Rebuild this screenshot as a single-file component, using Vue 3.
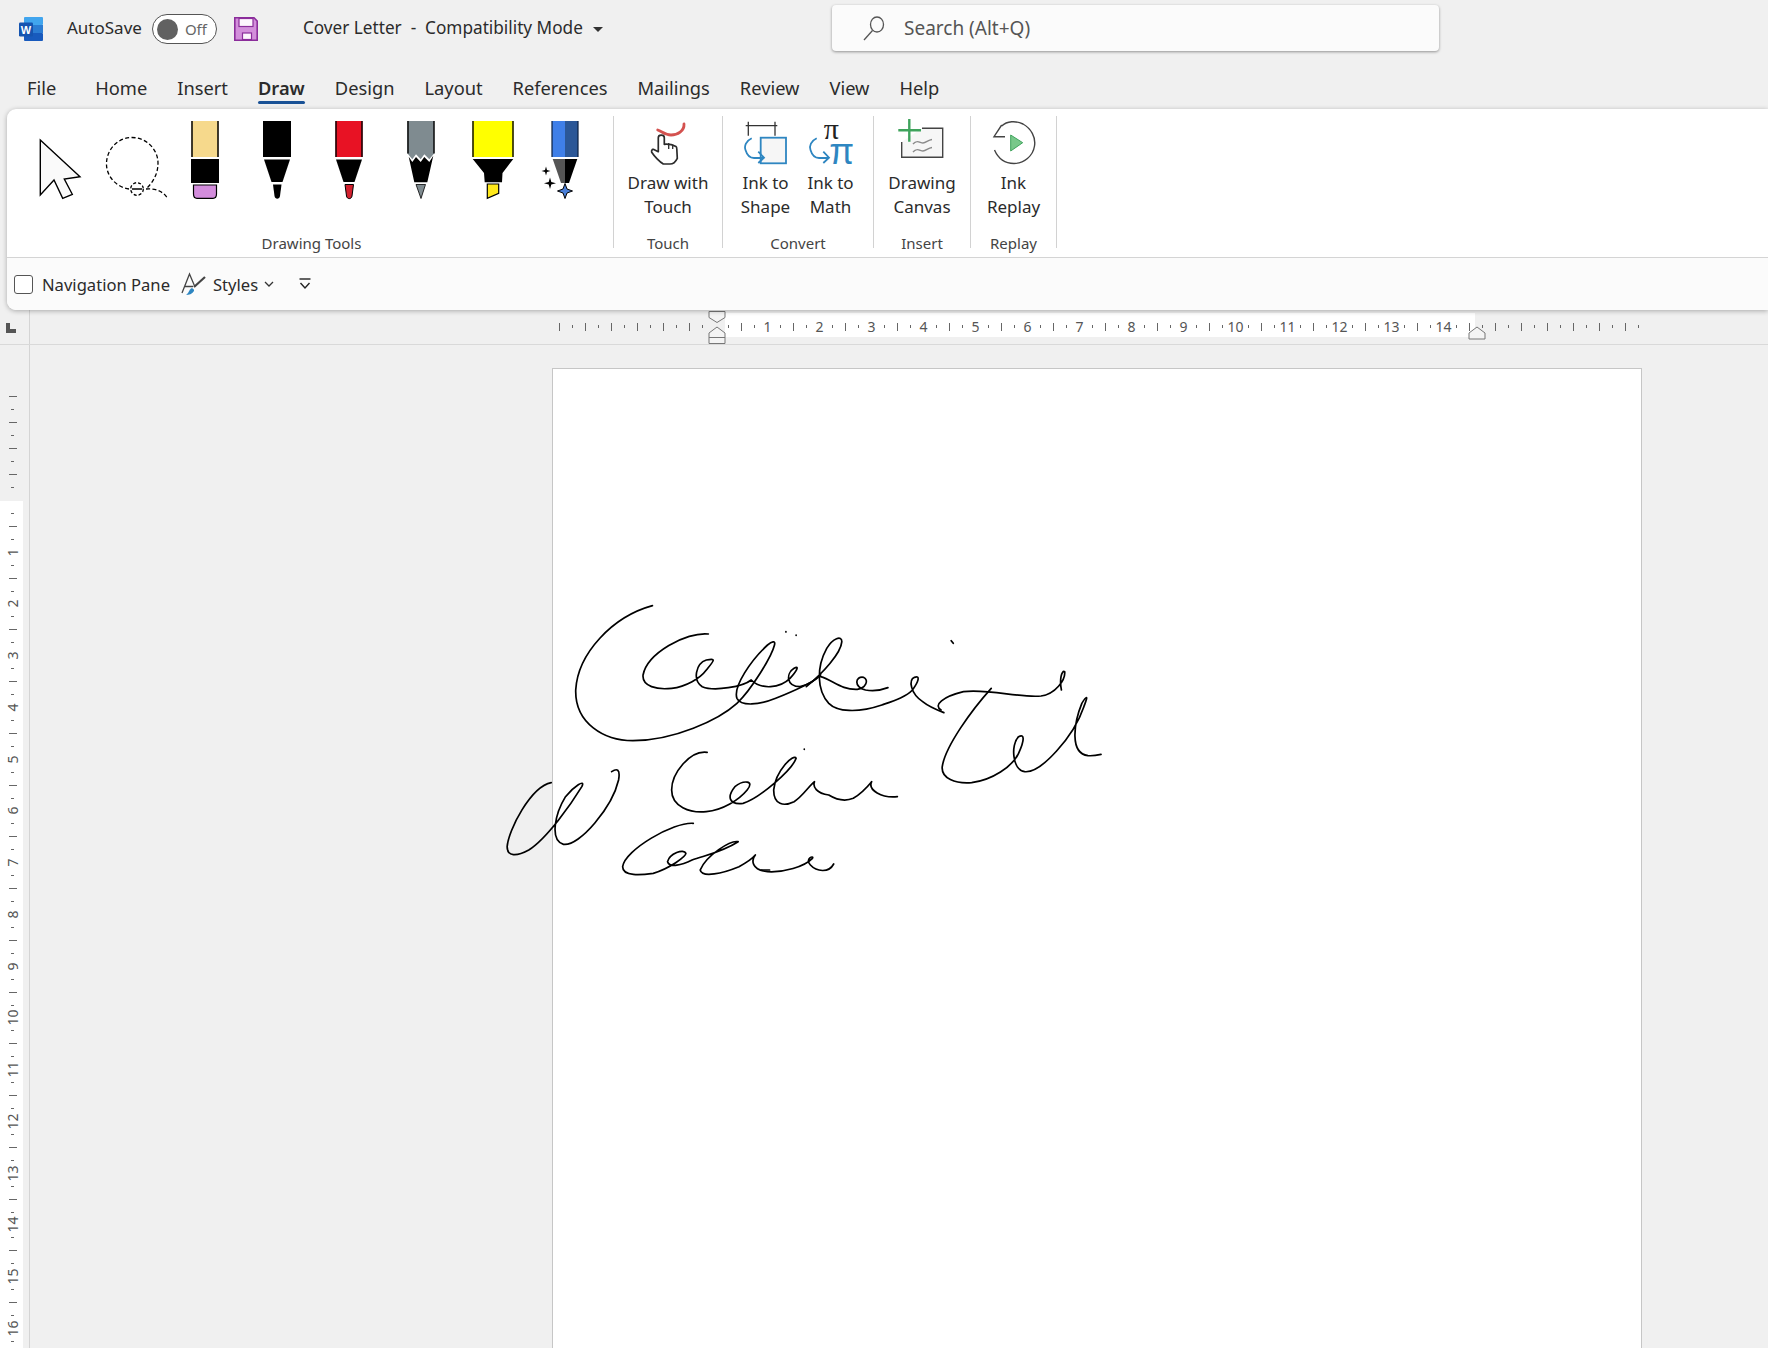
<script setup>
const tabs = ['File', 'Home', 'Insert', 'Draw', 'Design', 'Layout', 'References', 'Mailings', 'Review', 'View', 'Help']

const hTicks = []
for (let k = 0; k < 84; k++) {
  const q = k - 12
  let kind = 'dot'
  if (q % 2 === 0) kind = 'tall'
  if (q === 0) kind = 'none'
  const num = q > 0 && q % 4 === 0 && q <= 56 ? q / 4 : null
  hTicks.push({ k, kind, num })
}

const vTicks = []
for (let k = 0; k < 74; k++) {
  const q = k - 8
  let kind = 'dot'
  if (q % 2 === 0) kind = 'tall'
  if (q === 0) kind = 'none'
  const num = q > 0 && q % 4 === 0 ? q / 4 : null
  vTicks.push({ k, kind, num })
}
</script>

<template>
  <div class="app">
    <!-- title bar -->
    <div class="titlebar">
      <div class="title-left">
        <svg class="word-icon" width="24" height="24" viewBox="0 0 24 24">
          <rect x="5" y="0" width="19" height="8" rx="1" fill="#41a5ee" />
          <rect x="5" y="8" width="19" height="8" fill="#2b7cd3" />
          <rect x="5" y="16" width="19" height="8" rx="1" fill="#185abd" />
          <rect x="0" y="5.5" width="14" height="14" rx="1.2" fill="#1554b0" />
          <text x="7" y="16.5" text-anchor="middle" class="word-w">W</text>
        </svg>
        <span class="autosave">AutoSave</span>
        <div class="toggle">
          <span class="knob"></span>
          <span class="off">Off</span>
        </div>
        <svg class="save-icon" width="24" height="24" viewBox="0 0 24 24">
          <path d="M.8.8H20L23.2 4V23.2H.8Z" fill="#d38fdb" stroke="#8b2d9b" stroke-width="1.6" />
          <rect x="5" y="1.5" width="14" height="8" fill="#fdf5fd" stroke="#8b2d9b" stroke-width="1.2" />
          <rect x="8.5" y="16" width="9" height="6.5" fill="#fdf5fd" stroke="#8b2d9b" stroke-width="1.2" />
        </svg>
        <span class="doc-title">Cover Letter&nbsp; -&nbsp; Compatibility Mode</span>
        <span class="caret"></span>
      </div>
      <div class="search">
        <svg width="24" height="26" viewBox="0 0 24 26" fill="none" stroke="#555" stroke-width="1.3">
          <ellipse cx="15" cy="9.5" rx="6.5" ry="7.5" />
          <path d="M10.5 15.5 2 25" />
        </svg>
        <span class="search-text">Search (Alt+Q)</span>
      </div>
    </div>

    <!-- tabs -->
    <div class="tabs">
      <span v-for="t in tabs" :key="t" class="tab" :class="{ active: t === 'Draw', file: t === 'File' }">{{ t }}</span>
    </div>

    <!-- ribbon -->
    <div class="ribbon">
      <div class="ribbon-top">
        <div class="group tools-group">
          <div class="tools">
            <!-- select arrow -->
            <svg class="tool" viewBox="0 0 72 78">
              <path d="M16.3 19 56 55.7 40.3 58 48.3 73.3 38.7 77.3 30 59 16.3 74Z" fill="#fafafa" stroke="#000" stroke-width="1.4" />
            </svg>
            <!-- lasso -->
            <svg class="tool" viewBox="0 0 72 78" fill="none" stroke="#000" stroke-width="1.3">
              <path d="M33 68C20 66 10 55 10.500 42 11 28 22 16.500 36 16.500 50 16.500 62 28 62 42 62 53 57 61 51 67" stroke-dasharray="4 2.4" />
              <circle cx="41" cy="68" r="6.300" stroke-dasharray="3 2" />
              <path d="M36 68H46" />
              <path d="M50 68C60 67 68 71 72 78" stroke-dasharray="4 2.4" />
            </svg>
            <!-- pencil with eraser -->
            <svg class="tool" viewBox="0 0 72 78">
              <rect x="23.500" y="0" width="27" height="36" fill="#f6d98c" />
              <path d="M24 0V36M50 0V36" stroke="#000" stroke-width="1.500" />
              <rect x="23" y="38" width="28" height="24" />
              <path d="M25.500 64H48.500V73C48.500 76 47 77.300 45 77.300H29C27 77.300 25.500 76 25.500 73Z" fill="#d38cdc" stroke="#000" stroke-width="1.200" />
            </svg>
            <!-- black pen -->
            <svg class="tool" viewBox="0 0 72 78">
              <rect x="23" y="0" width="28" height="36" />
              <path d="M24 38.500H50L42.500 61H31.500Z" />
              <path d="M33 63.500H41.500L40 75C39.500 78.500 35 78.500 34.500 75Z" />
            </svg>
            <!-- red pen -->
            <svg class="tool" viewBox="0 0 72 78">
              <rect x="23.500" y="0" width="27" height="36" fill="#e81224" />
              <path d="M24 0V36M50 0V36" stroke="#000" stroke-width="1.400" />
              <path d="M24 38.500H50L42.500 61H31.500Z" />
              <path d="M33 63.500H41.500L40 75C39.500 78.500 35 78.500 34.500 75Z" fill="#d3202e" stroke="#000" stroke-width="1" />
            </svg>
            <!-- pencil -->
            <svg class="tool" viewBox="0 0 72 78">
              <path d="M23.300 0H50.300V32.300L45.300 38.300 40.300 33.300 36.700 38.300 32 33.300 28.300 38.300 23.300 32.300Z" fill="#7f8b90" />
              <path d="M24 0V32.500M50 0V32.500" stroke="#000" stroke-width="1.400" />
              <path d="M24.700 35.700 28.300 41 32 36 36.700 41 40.300 36 45.300 41 49.300 34.700 43.300 61.300H30.300Z" />
              <path d="M32 63.500H41.500L37 77.500Z" fill="#7f8b90" stroke="#000" stroke-width=".8" />
            </svg>
            <!-- highlighter -->
            <svg class="tool" viewBox="0 0 72 78">
              <rect x="16.500" y="0" width="41" height="36" fill="#ffff00" />
              <path d="M17 0V36M57 0V36" stroke="#000" stroke-width="1.400" />
              <path d="M16.700 38H57.300L46.500 52 46 61.300H28.700L28 52Z" />
              <path d="M31.300 63H42.700V72.300L31.300 77.300Z" fill="#ffe81a" stroke="#000" stroke-width="1.200" />
            </svg>
            <!-- glitter pen -->
            <svg class="tool" viewBox="0 0 72 78">
              <rect x="24" y="0" width="13" height="36" fill="#3f7fe8" />
              <rect x="37" y="0" width="13" height="36" fill="#2b5797" />
              <path d="M24 0V36M50 0V36" stroke="#0b1f3f" stroke-width="1.200" />
              <path d="M24.700 38H37V62H33Z" fill="#555" />
              <path d="M37 38H49.300L41 62H37Z" />
              <path d="M37 62.500 39 68 44.500 70 39 72 37 77.500 35 72 29.500 70 35 68Z" fill="#4a7fd8" stroke="#000" stroke-width="1" />
              <path d="M18 45.500 19 49 22.500 50 19 51 18 54.500 17 51 13.500 50 17 49Z" />
              <path d="M22 56.500 23.300 61 28 62.300 23.300 63.600 22 68 20.700 63.600 16 62.300 20.700 61Z" />
            </svg>
          </div>
          <div class="group-label tools-label">Drawing Tools</div>
        </div>

        <div class="group touch-group">
          <div class="big-row">
            <div class="big">
              <svg class="big-icon" viewBox="0 0 60 53" fill="none">
                <path d="M19.700 12C24 13.500 27 17 33 17 39.500 17 46.500 13 46 6" stroke="#d4524f" stroke-width="2.800" stroke-linecap="round" />
                <path d="M20.300 33.700V19.700C20.300 16.300 26.300 16.300 26.300 19.700V26.300C30 26 35 27 38 28.500 39 29 38.800 31 38.900 33L39.300 40.300C38 43 35 46 32 46H25.300C22 44 16 38 13.700 34.300 13 32 15 31 15.300 31.300Z" fill="#fff" stroke="#2b2b2b" stroke-width="1.700" stroke-linejoin="round" />
                <path d="M30.700 25V31M34.700 26.500V31" stroke="#2b2b2b" stroke-width="1.300" />
              </svg>
              <div class="big-text">Draw with<br />Touch</div>
            </div>
          </div>
          <div class="group-label">Touch</div>
        </div>

        <div class="group convert-group">
          <div class="big-row">
            <div class="big">
              <svg class="big-icon" viewBox="0 0 60 53" fill="none">
                <path d="M9.700 7.700H41.300M12.300 3.700V17.700M39 3.700V17.700" stroke="#333" stroke-width="1.300" />
                <rect x="24.700" y="19.700" width="25.300" height="25.600" fill="#f6f6f6" stroke="#2e86c1" stroke-width="1.800" />
                <path d="M15.700 20.300C10 23 8 28 9.500 32 11 37 14 40 18 40H27.300M22.300 33.700 28 39.700 22.300 45" stroke="#2e86c1" stroke-width="1.800" />
              </svg>
              <div class="big-text">Ink to<br />Shape</div>
            </div>
            <div class="big">
              <svg class="big-icon" viewBox="0 0 60 53" fill="none">
                <text x="30.300" y="21" text-anchor="middle" class="pi-small">π</text>
                <text x="40.600" y="45.500" text-anchor="middle" class="pi-big">π</text>
                <path d="M15.700 20.300C10 23 8 28 9.500 32 11 37 14 40 18 40H27.300M22.300 33.700 28 39.700 22.300 45" stroke="#2e86c1" stroke-width="1.800" />
              </svg>
              <div class="big-text">Ink to<br />Math</div>
            </div>
          </div>
          <div class="group-label">Convert</div>
        </div>

        <div class="group insert-group">
          <div class="big-row">
            <div class="big">
              <svg class="big-icon" viewBox="0 0 60 53" fill="none">
                <path d="M9.700 24V39.300H50.700V10.300H30" fill="#f6f6f6" stroke="#444" stroke-width="1.400" />
                <path d="M6.300 12.300H29M17.300 1V23.700" stroke="#3fa35c" stroke-width="2.400" />
                <path d="M21 26C25 21 28 25 31 25 34 25 36 22 40 21.500M21 34C25 29 28 33 31 33 34 33 36 30 40 29.500" stroke="#8a8a8a" stroke-width="1.400" />
              </svg>
              <div class="big-text">Drawing<br />Canvas</div>
            </div>
          </div>
          <div class="group-label">Insert</div>
        </div>

        <div class="group replay-group">
          <div class="big-row">
            <div class="big">
              <svg class="big-icon" viewBox="0 0 60 53" fill="none">
                <path d="M17.700 8C23 3 32 2.500 39 6 47 10.500 52 19 50.500 28 49 38 40 45.500 30 45.500 21 45.500 14 40 10.500 32" stroke="#444" stroke-width="1.400" />
                <path d="M17.700 7 10 18.700H21" stroke="#444" stroke-width="1.400" />
                <path d="M26.700 17 38.700 24.700 26.700 33Z" fill="#78c88a" stroke="#3fa35c" stroke-width="1" />
              </svg>
              <div class="big-text">Ink<br />Replay</div>
            </div>
          </div>
          <div class="group-label">Replay</div>
        </div>
      </div>

      <div class="ribbon-bottom">
        <span class="checkbox"></span>
        <span class="nav-label">Navigation Pane</span>
        <svg class="styles-icon" width="26" height="24" viewBox="0 0 26 24" fill="none">
          <path d="M1 21 8.500 2 14 15M4 14.500H12" stroke="#444" stroke-width="1.300" />
          <path d="M13 15 24 5" stroke="#444" stroke-width="2.200" />
          <path d="M5 23C8 23 11 22 13 19 13.500 17.500 11.500 15.500 10 16.500 8 18 8 21 5 23Z" fill="#2e86c1" />
        </svg>
        <span class="styles-label">Styles</span>
        <svg class="chev" width="10" height="6" viewBox="0 0 10 6" fill="none">
          <path d="M1 1 5 5 9 1" stroke="#333" stroke-width="1.300" />
        </svg>
        <svg class="more" width="12" height="12" viewBox="0 0 12 12" fill="none">
          <path d="M.5 1H11.500" stroke="#222" stroke-width="1.400" />
          <path d="M1.500 5 6 10 10.500 5" stroke="#222" stroke-width="1.400" />
        </svg>
      </div>
    </div>

    <!-- horizontal ruler -->
    <div class="ruler-row">
      <div class="corner"><span class="corner-mark"></span></div>
      <div class="hruler">
        <span v-for="t in hTicks" :key="t.k" class="hcell">
          <span v-if="t.num" class="rnum">{{ t.num }}</span>
          <span v-else :class="'h-' + t.kind"></span>
        </span>
      </div>
      <svg class="marker-left" width="18" height="34" viewBox="0 0 18 34" fill="#f4f4f4" stroke="#777" stroke-width="1">
        <path d="M1 1.500H17V7.500L9 12.500 1 7.500Z" />
        <path d="M9 17 17 23V33.500H1V23Z" />
        <path d="M1 27.500H17" />
      </svg>
      <svg class="marker-right" width="18" height="14" viewBox="0 0 18 14" fill="#f4f4f4" stroke="#777" stroke-width="1">
        <path d="M9 1 17 7V13H1V7Z" />
      </svg>
    </div>

    <!-- document area -->
    <div class="doc">
      <div class="vruler">
        <span v-for="t in vTicks" :key="t.k" class="vcell">
          <span v-if="t.num" class="rnum rot">{{ t.num }}</span>
          <span v-else :class="'v-' + t.kind"></span>
        </span>
      </div>
      <div class="page-wrap">
        <div class="page"></div>
      </div>
    </div>

    <!-- ink strokes, they run over the page edge -->
    <svg class="ink" viewBox="0 0 1568 930" preserveAspectRatio="none" fill="none">
      <g stroke="#000" stroke-width="1.700" stroke-linecap="round" stroke-linejoin="round">
        <path vector-effect="non-scaling-stroke" d="M398 47C300 80 215 190 210 300 208 400 280 452 350 452 450 452 560 390 605 340 640 300 690 200 697 165 700 150 690 155 680 165 640 210 595 290 605 325 615 350 660 345 700 325 740 305 780 285 800 265" />
        <path vector-effect="non-scaling-stroke" d="M535 132C480 125 385 190 375 255 372 290 410 300 445 295 480 290 515 265 530 240 550 210 555 205 530 210 505 220 495 270 520 290 550 305 620 290 640 270 665 300 710 295 735 265 750 245 760 225 745 235 725 250 725 290 760 290 775 285 795 275 810 255" />
        <path vector-effect="non-scaling-stroke" d="M775 290C815 250 860 190 862 155 862 135 840 145 825 175 800 230 800 300 830 340 850 365 900 370 960 345 990 332 1020 320 1035 300 1050 275 1055 255 1040 262 1025 270 1030 310 1060 335 1075 350 1095 360 1112 368" />
        <path vector-effect="non-scaling-stroke" d="M810 260C840 270 860 300 900 298 920 295 930 270 915 262 895 258 890 290 920 300 940 305 960 300 975 293" />
        <path vector-effect="non-scaling-stroke" d="M1105 360C1085 345 1110 320 1160 305 1220 295 1300 325 1350 318 1385 312 1410 270 1408 245 1400 240 1395 270 1400 300" />
        <path vector-effect="non-scaling-stroke" d="M1228 295C1180 360 1115 470 1108 530 1105 565 1140 582 1180 578 1230 570 1280 530 1295 490 1310 450 1310 430 1295 440 1275 465 1280 540 1310 545 1350 550 1430 440 1455 350 1468 310 1460 320 1450 340 1430 400 1420 490 1465 497 1475 498 1490 495 1497 493" />
        <path vector-effect="non-scaling-stroke" d="M532 487C490 480 445 550 445 600 445 650 490 670 530 665 570 660 610 630 630 600 650 570 620 570 600 590 580 620 585 645 620 640 660 625 740 540 750 505 745 490 700 540 695 600 695 645 720 650 745 635 765 620 780 590 795 575 790 590 800 610 830 615 850 630 870 635 890 625 910 610 925 590 935 575 925 600 960 625 998 620" />
        <path vector-effect="non-scaling-stroke" d="M150 578C100 590 45 720 42 770 42 800 65 800 95 780 140 745 200 640 225 590 235 565 205 590 185 620 160 670 145 750 180 763 220 770 300 650 315 570 320 535 310 535 298 545" />
        <path vector-effect="non-scaling-stroke" d="M498 700C450 695 330 780 325 830 325 860 370 855 400 850 440 835 480 800 480 790 475 775 440 790 435 815 440 835 470 825 495 810 530 795 570 785 608 755 590 750 530 795 515 840 520 865 570 850 610 830 640 810 650 795 650 795 640 810 640 840 680 845 720 848 770 830 790 805 795 795 770 805 785 825 800 845 830 850 842 822" />
        <path vector-effect="non-scaling-stroke" d="M725 125V126M750 135V136M1130 152 1135 160M770 477V478M665 840H685" />
      </g>
    </svg>
  </div>
</template>

<style scoped>
.app {
  position: relative;
  width: 1768px;
  height: 1348px;
  overflow: hidden;
  display: flex;
  flex-direction: column;
  background: #f0f0f0;
  color: #2b2b2b;
  font-family: "Noto Sans", "Open Sans", sans-serif;
  font-size: 17px;
}

.titlebar {
  height: 58px;
  flex-shrink: 0;
  display: flex;
  align-items: center;
}

.title-left {
  width: 832px;
  display: flex;
  align-items: center;
  padding-left: 19px;
  box-sizing: border-box;
}

.word-w {
  font-family: "Liberation Sans", sans-serif;
  font-size: 11px;
  font-weight: 700;
  fill: #fff;
}

.autosave {
  margin-left: 24px;
  margin-bottom: 4px;
}

.toggle {
  margin-left: 10px;
  width: 65px;
  height: 30px;
  box-sizing: border-box;
  border: 1px solid #555;
  border-radius: 15px;
  background: #fff;
  display: flex;
  align-items: center;
  padding-left: 4px;
  flex-shrink: 0;
}

.knob {
  width: 21px;
  height: 21px;
  border-radius: 50%;
  background: #616161;
}

.off {
  margin-left: 7px;
  font-size: 15px;
  color: #666;
}

.save-icon {
  margin-left: 17px;
}

.doc-title {
  margin-left: 45px;
  margin-bottom: 4px;
  font-size: 17.2px;
}

.caret {
  margin-left: 10px;
  border-left: 5px solid transparent;
  border-right: 5px solid transparent;
  border-top: 5px solid #333;
}

.search {
  width: 607px;
  height: 46px;
  margin-top: -2px;
  box-sizing: border-box;
  display: flex;
  align-items: center;
  padding-left: 30px;
  background: #fbfbfb;
  border-radius: 4px;
  box-shadow: 0 1px 3px rgba(0, 0, 0, 0.4);
}

.search-text {
  margin-left: 18px;
  font-size: 19px;
  color: #555;
}

.tabs {
  height: 51px;
  flex-shrink: 0;
  display: flex;
  gap: 30px;
  padding-left: 27px;
  box-sizing: border-box;
  font-size: 18.3px;
}

.tab {
  position: relative;
  height: 46px;
  line-height: 60px;
}

.tab.file {
  margin-right: 9px;
}

.tab.active {
  font-weight: 600;
}

.tab.active::after {
  content: "";
  position: absolute;
  left: 0;
  right: 0;
  bottom: 0;
  height: 3px;
  border-radius: 2px;
  background: #1a5296;
}

.ribbon {
  position: relative;
  z-index: 2;
  height: 201px;
  flex-shrink: 0;
  margin-left: 7px;
  background: #fff;
  border-radius: 9px 0 0 9px;
  box-shadow: 0 1px 5px rgba(0, 0, 0, 0.3);
  overflow: hidden;
}

.ribbon-top {
  height: 148px;
  display: flex;
  border-bottom: 1px solid #d4d4d4;
  box-sizing: content-box;
}

.group {
  height: 132px;
  margin-top: 7px;
  box-sizing: border-box;
  display: flex;
  flex-direction: column;
  justify-content: space-between;
  border-right: 1px solid #d2d2d2;
}

.tools-group {
  width: 607px;
}

.touch-group {
  width: 109px;
}

.convert-group {
  width: 151px;
}

.insert-group {
  width: 97px;
}

.replay-group {
  width: 86px;
}

.tools {
  display: flex;
  padding-left: 17px;
  margin-top: 5px;
}

.tool {
  width: 72px;
  height: 78px;
  flex-shrink: 0;
  overflow: visible;
}

.group-label {
  text-align: center;
  font-size: 15px;
  line-height: 10px;
  color: #444;
}

.tools-label {
  padding-left: 3px;
}

.big-row {
  display: flex;
  justify-content: center;
  margin-top: 2px;
}

.big {
  width: 65px;
  display: flex;
  flex-direction: column;
  align-items: center;
}

.big-icon {
  width: 60px;
  height: 53px;
  flex-shrink: 0;
  overflow: visible;
}

.big-text {
  white-space: nowrap;
  text-align: center;
  line-height: 24px;
  font-size: 17px;
}

.pi-small {
  font-family: "Liberation Serif", serif;
  font-size: 30px;
  fill: #222;
}

.pi-big {
  font-family: "Liberation Sans", sans-serif;
  font-size: 36px;
  fill: #2e86c1;
}

.ribbon-bottom {
  height: 52px;
  display: flex;
  align-items: center;
  padding-left: 7px;
  background: #fbfbfb;
}

.checkbox {
  width: 17px;
  height: 17px;
  border: 1.5px solid #555;
  border-radius: 3px;
  background: #fff;
}

.nav-label {
  margin-left: 9px;
  font-size: 16.6px;
}

.styles-icon {
  margin-left: 11px;
}

.styles-label {
  margin-left: 6px;
  font-size: 16.6px;
}

.chev {
  margin-left: 6px;
}

.more {
  margin-left: 25px;
}

.ruler-row {
  position: relative;
  height: 35px;
  flex-shrink: 0;
  display: flex;
  box-sizing: border-box;
  border-bottom: 1px solid #d9d9d9;
}

.corner {
  width: 30px;
  flex-shrink: 0;
  box-sizing: border-box;
  border-right: 1px solid #d4d4d4;
  position: relative;
}

.corner-mark {
  position: absolute;
  left: 6px;
  top: 13px;
  width: 10px;
  height: 10px;
  box-sizing: border-box;
  border-left: 4px solid #555;
  border-bottom: 4px solid #555;
}

.hruler {
  flex: 1;
  display: flex;
  align-items: center;
  padding: 0 0 0 523px;
  height: 34px;
  margin-top: 0;
  background: linear-gradient(#fff, #fff) 695px 3px / 750px 24px no-repeat;
}

.hcell {
  width: 13px;
  height: 34px;
  margin-top: -1px;
  flex-shrink: 0;
  display: flex;
  align-items: center;
  justify-content: center;
  position: relative;
  top: 0;
}

.rnum {
  font-size: 14px;
  color: #555;
  white-space: nowrap;
}

.rot {
  transform: rotate(-90deg);
}

.h-tall {
  width: 1px;
  height: 8px;
  background: #666;
}

.h-dot {
  width: 1px;
  height: 3px;
  background: #666;
}

.marker-left {
  position: absolute;
  left: 708px;
  top: 0;
}

.marker-right {
  position: absolute;
  left: 1468px;
  top: 16px;
}

.doc {
  flex: 1;
  display: flex;
  min-height: 0;
}

.vruler {
  width: 30px;
  flex-shrink: 0;
  box-sizing: border-box;
  border-right: 1px solid #d4d4d4;
  padding-top: 45.5px;
  overflow: hidden;
  display: flex;
  flex-direction: column;
  background: linear-gradient(#fff, #fff) 0 156px / 23px 900px no-repeat;
}

.vcell {
  height: 12.95px;
  width: 25px;
  flex-shrink: 0;
  display: flex;
  align-items: center;
  justify-content: center;
}

.v-tall {
  width: 8px;
  height: 1px;
  background: #666;
}

.v-dot {
  width: 3px;
  height: 1px;
  background: #666;
}

.page-wrap {
  flex: 1;
  padding: 23px 0 0 522px;
  overflow: hidden;
}

.page {
  width: 1090px;
  height: 1000px;
  box-sizing: border-box;
  background: #fff;
  border: 1px solid #c6c6c6;
}

.ink {
  position: absolute;
  left: 490px;
  top: 590px;
  width: 640px;
  height: 310px;
  z-index: 3;
}
</style>
